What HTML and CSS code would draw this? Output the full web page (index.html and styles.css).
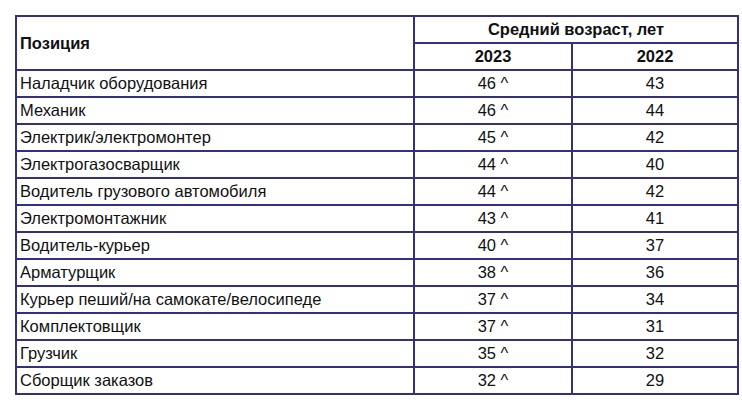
FILE: index.html
```html
<!DOCTYPE html>
<html lang="ru">
<head>
<meta charset="utf-8">
<link rel="stylesheet" href="styles.css">
</head>
<body>
<table class="age-table">
  <colgroup>
    <col class="c-pos">
    <col class="c-y1">
    <col class="c-y2">
  </colgroup>
  <thead>
    <tr>
      <th class="pos-head" rowspan="2">Позиция</th>
      <th class="center" colspan="2">Средний возраст, лет</th>
    </tr>
    <tr>
      <th class="center">2023</th>
      <th class="center">2022</th>
    </tr>
  </thead>
  <tbody>
    <tr><td>Наладчик оборудования</td><td class="center">46 ^</td><td class="center">43</td></tr>
    <tr><td>Механик</td><td class="center">46 ^</td><td class="center">44</td></tr>
    <tr><td>Электрик/электромонтер</td><td class="center">45 ^</td><td class="center">42</td></tr>
    <tr><td>Электрогазосварщик</td><td class="center">44 ^</td><td class="center">40</td></tr>
    <tr><td>Водитель грузового автомобиля</td><td class="center">44 ^</td><td class="center">42</td></tr>
    <tr><td>Электромонтажник</td><td class="center">43 ^</td><td class="center">41</td></tr>
    <tr><td>Водитель-курьер</td><td class="center">40 ^</td><td class="center">37</td></tr>
    <tr><td>Арматурщик</td><td class="center">38 ^</td><td class="center">36</td></tr>
    <tr><td>Курьер пеший/на самокате/велосипеде</td><td class="center">37 ^</td><td class="center">34</td></tr>
    <tr><td>Комплектовщик</td><td class="center">37 ^</td><td class="center">31</td></tr>
    <tr><td>Грузчик</td><td class="center">35 ^</td><td class="center">32</td></tr>
    <tr><td>Сборщик заказов</td><td class="center">32 ^</td><td class="center">29</td></tr>
  </tbody>
</table>
</body>
</html>
```

FILE: styles.css
```css
html, body {
  margin: 0;
  padding: 0;
  background: #ffffff;
}
body {
  padding: 15px 0 0 15px;
  font-family: "Liberation Sans", Arial, sans-serif;
  font-size: 16.5px;
  color: #111111;
}
.age-table {
  border-collapse: collapse;
  table-layout: fixed;
  width: 722px;
}
.c-pos { width: 398px; }
.c-y1 { width: 158px; }
.c-y2 { width: 166px; }
.age-table th,
.age-table td {
  border: 2px solid #33307f;
  height: 27px;
  padding: 0 3px;
  box-sizing: border-box;
  line-height: 19px;
  vertical-align: middle;
  font-weight: normal;
  text-align: left;
}
.age-table th {
  font-weight: bold;
}
.age-table .center {
  text-align: center;
}
```
